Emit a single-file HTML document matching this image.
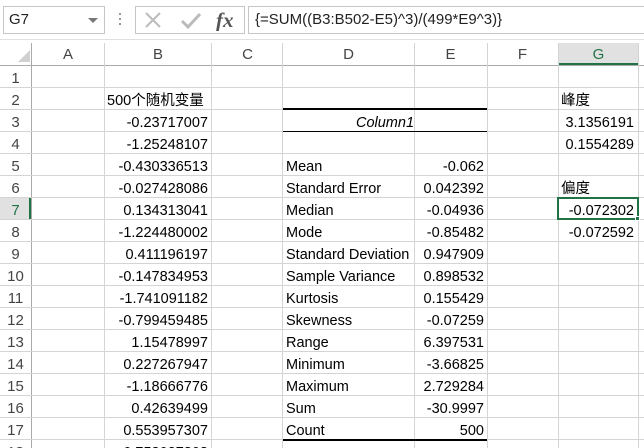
<!DOCTYPE html>
<html><head><meta charset="utf-8"><style>
*{margin:0;padding:0;box-sizing:border-box}
html,body{width:644px;height:448px;overflow:hidden}
body{background:#fff;font-family:"Liberation Sans","Noto Sans CJK SC",sans-serif;font-size:14.5px;color:#000;position:relative}
.a{position:absolute}
.h{position:absolute;background:#d4d4d4}
.t{position:absolute;height:22px;line-height:26px;white-space:nowrap}
.r{text-align:right}
.ch{position:absolute;top:43px;height:22px;line-height:24px;text-align:center;color:#444;font-size:15px}
.rh{position:absolute;left:0;width:31px;height:22px;line-height:25px;text-align:center;color:#444;font-size:15px}
</style></head><body>
<div class="a" style="left:3px;top:6px;width:102px;height:28px;border:1px solid #c6c6c6"></div>
<div class="t" style="left:9px;top:8px;font-size:15px;color:#222;line-height:24px">G7</div>
<div class="a" style="left:88px;top:18px;width:0;height:0;border-left:5px solid transparent;border-right:5px solid transparent;border-top:5px solid #777"></div>
<div class="a" style="left:119px;top:13px;width:2px;height:2px;background:#999;box-shadow:0 5px 0 #999,0 10px 0 #999"></div>
<div class="a" style="left:135px;top:6px;width:110px;height:28px;border:1px solid #c6c6c6"></div>
<svg class="a" style="left:140px;top:9px" width="100" height="22"><path d="M6 4 L20 18 M20 4 L6 18" stroke="#bbb" stroke-width="2" fill="none"/><path d="M42 12 L48 18 L60 5" stroke="#bbb" stroke-width="3" fill="none"/><text x="76" y="18" font-family="Liberation Serif" font-style="italic" font-weight="bold" font-size="21" fill="#555">fx</text></svg>
<div class="a" style="left:248px;top:6px;width:400px;height:28px;border:1px solid #c6c6c6"></div>
<div class="t" style="left:255px;top:8px;font-size:15px;color:#222;line-height:24px">{=SUM((B3:B502-E5)^3)/(499*E9^3)}</div>
<div class="h" style="left:0;top:39px;width:644px;height:1px;background:#e0e0e0"></div>
<div class="a" style="left:558px;top:43px;width:81px;height:22px;background:#e1e1e1;border-bottom:2px solid #217346"></div>
<div class="a" style="left:0;top:198px;width:31px;height:22px;background:#e1e1e1;border-right:2px solid #217346"></div>
<svg class="a" style="left:18px;top:50px" width="12" height="12"><path d="M12 0 L12 12 L0 12Z" fill="#d0d0d0"/></svg>
<div class="ch" style="left:32px;width:72px">A</div>
<div class="ch" style="left:104px;width:108px">B</div>
<div class="ch" style="left:212px;width:71px">C</div>
<div class="ch" style="left:283px;width:131px">D</div>
<div class="ch" style="left:414px;width:73px">E</div>
<div class="ch" style="left:487px;width:71px">F</div>
<div class="ch" style="left:558px;width:81px;color:#217346">G</div>
<div class="h" style="left:31px;top:43px;width:1px;height:405px;background:#aaa"></div>
<div class="h" style="left:0;top:65px;width:644px;height:1px;background:#aaa"></div>
<div class="h" style="left:104px;top:43px;width:1px;height:405px"></div>
<div class="h" style="left:211px;top:43px;width:1px;height:405px"></div>
<div class="h" style="left:282px;top:43px;width:1px;height:405px"></div>
<div class="h" style="left:414px;top:43px;width:1px;height:405px"></div>
<div class="h" style="left:487px;top:43px;width:1px;height:405px"></div>
<div class="h" style="left:558px;top:43px;width:1px;height:405px"></div>
<div class="h" style="left:638px;top:43px;width:1px;height:405px"></div>
<div class="h" style="left:0;top:87px;width:644px;height:1px"></div>
<div class="h" style="left:0;top:109px;width:644px;height:1px"></div>
<div class="h" style="left:0;top:131px;width:644px;height:1px"></div>
<div class="h" style="left:0;top:153px;width:644px;height:1px"></div>
<div class="h" style="left:0;top:175px;width:644px;height:1px"></div>
<div class="h" style="left:0;top:197px;width:644px;height:1px"></div>
<div class="h" style="left:0;top:219px;width:644px;height:1px"></div>
<div class="h" style="left:0;top:241px;width:644px;height:1px"></div>
<div class="h" style="left:0;top:263px;width:644px;height:1px"></div>
<div class="h" style="left:0;top:285px;width:644px;height:1px"></div>
<div class="h" style="left:0;top:307px;width:644px;height:1px"></div>
<div class="h" style="left:0;top:329px;width:644px;height:1px"></div>
<div class="h" style="left:0;top:351px;width:644px;height:1px"></div>
<div class="h" style="left:0;top:373px;width:644px;height:1px"></div>
<div class="h" style="left:0;top:395px;width:644px;height:1px"></div>
<div class="h" style="left:0;top:417px;width:644px;height:1px"></div>
<div class="h" style="left:0;top:439px;width:644px;height:1px"></div>
<div class="a" style="left:283px;top:108px;width:204px;height:2px;background:#000"></div>
<div class="a" style="left:283px;top:131px;width:204px;height:1px;background:#000"></div>
<div class="a" style="left:283px;top:439px;width:204px;height:2px;background:#000"></div>
<div class="a" style="left:557px;top:197px;width:82px;height:23px;border:2px solid #217346"></div>
<div class="a" style="left:635px;top:216px;width:5px;height:5px;background:#217346;border:1px solid #fff"></div>
<div class="rh" style="top:66px">1</div><div class="rh" style="top:88px">2</div><div class="rh" style="top:110px">3</div><div class="rh" style="top:132px">4</div><div class="rh" style="top:154px">5</div><div class="rh" style="top:176px">6</div><div class="rh" style="top:198px;color:#217346">7</div><div class="rh" style="top:220px">8</div><div class="rh" style="top:242px">9</div><div class="rh" style="top:264px">10</div><div class="rh" style="top:286px">11</div><div class="rh" style="top:308px">12</div><div class="rh" style="top:330px">13</div><div class="rh" style="top:352px">14</div><div class="rh" style="top:374px">15</div><div class="rh" style="top:396px">16</div><div class="rh" style="top:418px">17</div><div class="rh" style="top:440px">18</div>
<div class="t" style="left:107px;top:88px">500个随机变量</div>
<div class="t r" style="left:104px;width:104px;top:110px">-0.23717007</div>
<div class="t r" style="left:104px;width:104px;top:132px">-1.25248107</div>
<div class="t r" style="left:104px;width:104px;top:154px">-0.430336513</div>
<div class="t r" style="left:104px;width:104px;top:176px">-0.027428086</div>
<div class="t r" style="left:104px;width:104px;top:198px">0.134313041</div>
<div class="t r" style="left:104px;width:104px;top:220px">-1.224480002</div>
<div class="t r" style="left:104px;width:104px;top:242px">0.411196197</div>
<div class="t r" style="left:104px;width:104px;top:264px">-0.147834953</div>
<div class="t r" style="left:104px;width:104px;top:286px">-1.741091182</div>
<div class="t r" style="left:104px;width:104px;top:308px">-0.799459485</div>
<div class="t r" style="left:104px;width:104px;top:330px">1.15478997</div>
<div class="t r" style="left:104px;width:104px;top:352px">0.227267947</div>
<div class="t r" style="left:104px;width:104px;top:374px">-1.18666776</div>
<div class="t r" style="left:104px;width:104px;top:396px">0.42639499</div>
<div class="t r" style="left:104px;width:104px;top:418px">0.553957307</div>
<div class="t r" style="left:104px;width:104px;top:440px">0.753027308</div>
<div class="t" style="left:283px;width:204px;top:110px;text-align:center;font-style:italic">Column1</div>
<div class="t" style="left:286px;top:154px">Mean</div><div class="t r" style="left:414px;width:70px;top:154px">-0.062</div>
<div class="t" style="left:286px;top:176px">Standard Error</div><div class="t r" style="left:414px;width:70px;top:176px">0.042392</div>
<div class="t" style="left:286px;top:198px">Median</div><div class="t r" style="left:414px;width:70px;top:198px">-0.04936</div>
<div class="t" style="left:286px;top:220px">Mode</div><div class="t r" style="left:414px;width:70px;top:220px">-0.85482</div>
<div class="t" style="left:286px;top:242px">Standard Deviation</div><div class="t r" style="left:414px;width:70px;top:242px">0.947909</div>
<div class="t" style="left:286px;top:264px">Sample Variance</div><div class="t r" style="left:414px;width:70px;top:264px">0.898532</div>
<div class="t" style="left:286px;top:286px">Kurtosis</div><div class="t r" style="left:414px;width:70px;top:286px">0.155429</div>
<div class="t" style="left:286px;top:308px">Skewness</div><div class="t r" style="left:414px;width:70px;top:308px">-0.07259</div>
<div class="t" style="left:286px;top:330px">Range</div><div class="t r" style="left:414px;width:70px;top:330px">6.397531</div>
<div class="t" style="left:286px;top:352px">Minimum</div><div class="t r" style="left:414px;width:70px;top:352px">-3.66825</div>
<div class="t" style="left:286px;top:374px">Maximum</div><div class="t r" style="left:414px;width:70px;top:374px">2.729284</div>
<div class="t" style="left:286px;top:396px">Sum</div><div class="t r" style="left:414px;width:70px;top:396px">-30.9997</div>
<div class="t" style="left:286px;top:418px">Count</div><div class="t r" style="left:414px;width:70px;top:418px">500</div>
<div class="t" style="left:561px;top:88px">峰度</div>
<div class="t r" style="left:558px;width:76px;top:110px">3.1356191</div>
<div class="t r" style="left:558px;width:76px;top:132px">0.1554289</div>
<div class="t" style="left:561px;top:176px">偏度</div>
<div class="t r" style="left:558px;width:76px;top:198px">-0.072302</div>
<div class="t r" style="left:558px;width:76px;top:220px">-0.072592</div>
</body></html>
